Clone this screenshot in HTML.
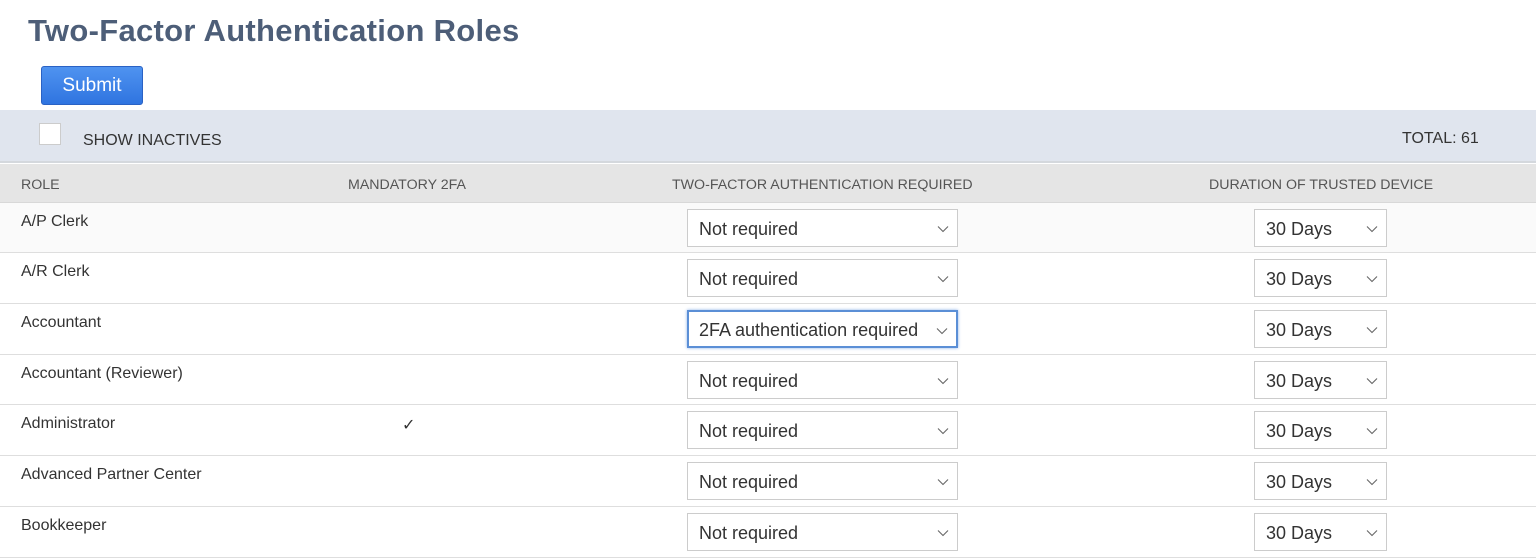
<!DOCTYPE html>
<html><head><meta charset="utf-8"><style>
*{box-sizing:border-box;margin:0;padding:0}
body{width:1536px;height:560px;overflow:hidden;background:#fff;font-family:"Liberation Sans",sans-serif;color:#333;position:relative}
.a{position:absolute}
h1{position:absolute;left:28px;top:13px;font-size:31px;font-weight:bold;color:#4d5e78;letter-spacing:0.3px}
.btn{left:41px;top:66px;width:102px;height:39px;border:1px solid #2a62c4;border-radius:3px;background:linear-gradient(#4f93f0,#2f74e0);color:#fff;font-size:19px;text-align:center;line-height:38px}
.band{left:0;top:110px;width:1536px;height:53px;background:#e0e5ee;border-bottom:2px solid #d4d8dd}
.cb{left:39px;top:123px;width:22px;height:22px;background:#fff;border:1px solid #ccc}
.hd{left:0;top:164px;width:1536px;height:39px;background:#e5e5e5;border-bottom:1px solid #d8d8d8;font-size:14.2px;color:#555}
.row{position:absolute;left:0;width:1536px;border-bottom:1px solid #dedede;font-size:16px}
.sel{position:absolute;top:6px;height:38px;background:#fff;border:1px solid #ccc;font-size:18px;line-height:38px;padding-left:11px;color:#333}
.sel svg{position:absolute;right:8px;top:15px}
</style></head><body>
<h1>Two-Factor Authentication Roles</h1>
<div class="a btn">Submit</div>
<div class="a band"></div>
<div class="a cb"></div>
<div class="a" style="left:83px;top:132px;font-size:16px;color:#333">SHOW INACTIVES</div>
<div class="a" style="left:1402px;top:130px;font-size:16px;color:#333">TOTAL: 61</div>
<div class="a hd">
<span class="a" style="left:21px;top:13px">ROLE</span>
<span class="a" style="left:348px;top:13px">MANDATORY 2FA</span>
<span class="a" style="left:672px;top:13px">TWO-FACTOR AUTHENTICATION REQUIRED</span>
<span class="a" style="left:1209px;top:13px">DURATION OF TRUSTED DEVICE</span>
</div>
<div id="rows"></div>
<script>
var r=[["A/P Clerk","Not required"],["A/R Clerk","Not required"],["Accountant","2FA authentication required"],["Accountant (Reviewer)","Not required"],["Administrator","Not required"],["Advanced Partner Center","Not required"],["Bookkeeper","Not required"]];
var tops=[203,253,304,355,405,456,507,558];
var chev='<svg width="12" height="8" viewBox="0 0 12 8"><path d="M1 1.5L6 6.5L11 1.5" fill="none" stroke="#666" stroke-width="1.1"/></svg>';
var h='';
r.forEach(function(x,i){
var top=tops[i],ht=tops[i+1]-top;
var bg=i==0?'#fafafa':'#fff';
var foc=i==2?'border:2px solid #5b8fd6;box-shadow:0 0 3px #8ab0e8;line-height:36px;padding-left:10px;':'';
h+='<div class="row" style="top:'+top+'px;height:'+ht+'px;background:'+bg+'"><span class="a" style="left:21px;top:10px">'+x[0]+'</span>'+(i==4?'<span class="a" style="left:402px;top:10px">✓</span>':'')+
'<div class="sel" style="left:687px;width:271px;'+foc+'">'+x[1]+chev+'</div><div class="sel" style="left:1254px;width:133px">30 Days'+chev+'</div></div>';
});
document.getElementById('rows').innerHTML=h;
</script>
</body></html>
